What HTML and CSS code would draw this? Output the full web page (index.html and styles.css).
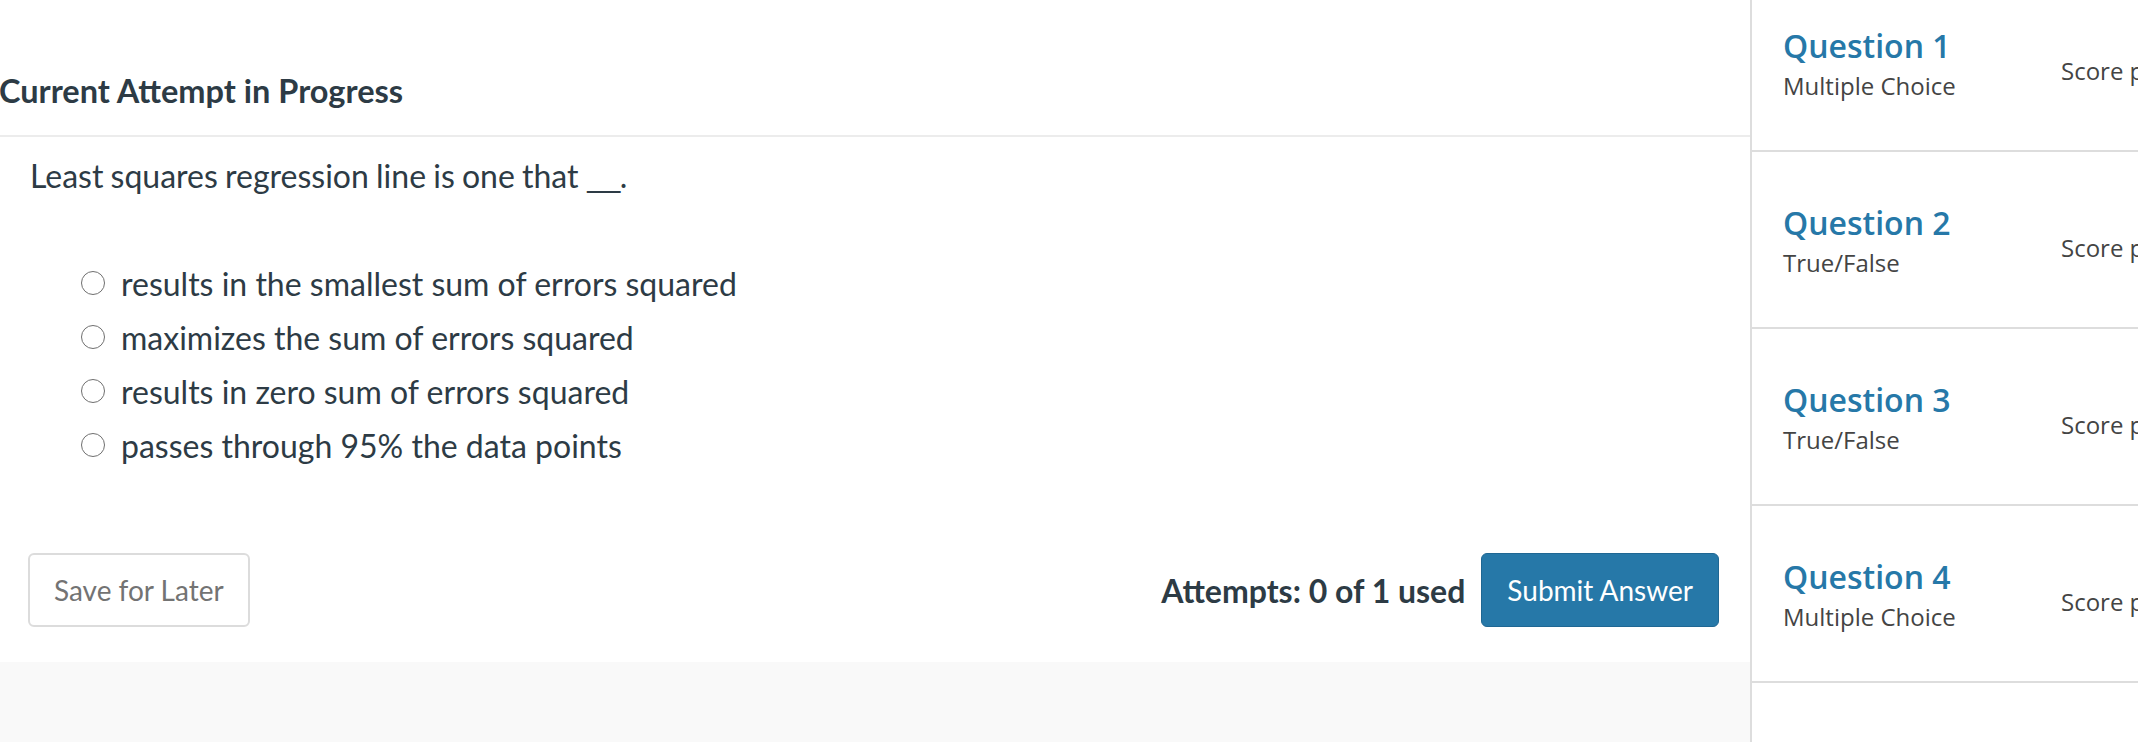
FILE: index.html
```html
<!DOCTYPE html>
<html lang="en">
<head>
<meta charset="utf-8">
<title>Current Attempt in Progress</title>
<link rel="stylesheet" href="styles.css">
</head>
<body>
<div class="page">
  <main class="attempt">
    <header class="attempt-header">
      <h2 class="attempt-title">Current Attempt in Progress</h2>
    </header>
    <section class="question">
      <p class="question-text">Least squares regression line is one that <span class="blank">___</span>.</p>
      <ul class="options">
        <li class="option"><span class="radio"></span><span class="option-label">results in the smallest sum of errors squared</span></li>
        <li class="option"><span class="radio"></span><span class="option-label">maximizes the sum of errors squared</span></li>
        <li class="option"><span class="radio"></span><span class="option-label">results in zero sum of errors squared</span></li>
        <li class="option"><span class="radio"></span><span class="option-label">passes through 95% the data points</span></li>
      </ul>
    </section>
    <div class="actions">
      <button class="btn btn-secondary" type="button">Save for Later</button>
      <div class="submit-group">
        <span class="attempts">Attempts: 0 of 1 used</span>
        <button class="btn btn-primary" type="button">Submit Answer</button>
      </div>
    </div>
    <div class="attempt-footer"></div>
  </main>
  <aside class="sidebar">
    <div class="q-row">
      <div class="q-info"><div class="q-title">Question 1</div><div class="q-type">Multiple Choice</div></div>
      <div class="q-score">Score pending</div>
    </div>
    <div class="q-row">
      <div class="q-info"><div class="q-title">Question 2</div><div class="q-type">True/False</div></div>
      <div class="q-score">Score pending</div>
    </div>
    <div class="q-row">
      <div class="q-info"><div class="q-title">Question 3</div><div class="q-type">True/False</div></div>
      <div class="q-score">Score pending</div>
    </div>
    <div class="q-row">
      <div class="q-info"><div class="q-title">Question 4</div><div class="q-type">Multiple Choice</div></div>
      <div class="q-score">Score pending</div>
    </div>
  </aside>
</div>
</body>
</html>
```
FILE: styles.css
```css
* { box-sizing: border-box; }
html, body { margin: 0; padding: 0; background: #fff; }
body {
  font-family: Lato, "Liberation Sans", sans-serif;
  color: #2d3b45;
  overflow: hidden;
}
.page {
  display: flex;
  width: 2138px;
  height: 742px;
  overflow: hidden;
}
.attempt {
  width: 1750px;
  flex: none;
  display: flex;
  flex-direction: column;
  height: 742px;
}
.attempt-header {
  padding: 71px 0 24px;
  border-bottom: 2px solid #ececec;
}
.attempt-title {
  margin: 0 0 0 -1px;
  font-size: 32.5px;
  line-height: 40px;
  font-weight: 700;
}
.question {
  padding: 21px 30px 0;
}
.question-text {
  margin: 0;
  font-size: 32px;
  line-height: 36px;
  word-spacing: -1px;
}
.blank {
  letter-spacing: -4px;
  margin-right: 2px;
}
.options {
  list-style: none;
  margin: 62px 0 0;
  padding: 0 0 0 51px;
}
.option {
  display: flex;
  align-items: center;
  height: 54px;
  font-size: 32px;
}
.radio {
  width: 24px;
  height: 24px;
  border: 1.8px solid #6f6f6f;
  border-radius: 50%;
  margin-right: 16px;
  flex: none;
}
.actions {
  display: flex;
  justify-content: space-between;
  align-items: center;
  padding: 81px 31px 35px 28px;
}
.submit-group {
  display: flex;
  align-items: center;
  gap: 16px;
}
.attempts {
  font-size: 32px;
  font-weight: 700;
}
.btn {
  font-family: Lato, "Liberation Sans", sans-serif;
  font-size: 28px;
  height: 74px;
  padding: 0 25px;
  border-radius: 6px;
  cursor: pointer;
}
.btn-secondary {
  background: #fff;
  color: #737373;
  border: 2px solid #dcdcdc;
  padding: 0 24px;
}
.btn-primary {
  background: #2678a8;
  color: #fff;
  border: 1.5px solid #1f6793;
}
.attempt-footer {
  flex: 1;
  background: #f9f9f9;
}
.sidebar {
  flex: 1;
  border-left: 2px solid #dddddd;
  margin-top: -25px;
  font-family: "Open Sans", "Liberation Sans", sans-serif;
}
.q-row {
  display: flex;
  align-items: flex-start;
  height: 177px;
  padding: 49px 0 0 31px;
  border-bottom: 2px solid #dddddd;
  white-space: nowrap;
}
.q-info {
  width: 278px;
  flex: none;
}
.q-title {
  color: #2678a8;
  font-size: 32px;
  line-height: 44px;
  font-weight: 600;
}
.q-type {
  color: #444;
  font-size: 24px;
  line-height: 36px;
}
.q-score {
  color: #444;
  font-size: 24px;
  line-height: 36px;
  margin-top: 29px;
}
```
